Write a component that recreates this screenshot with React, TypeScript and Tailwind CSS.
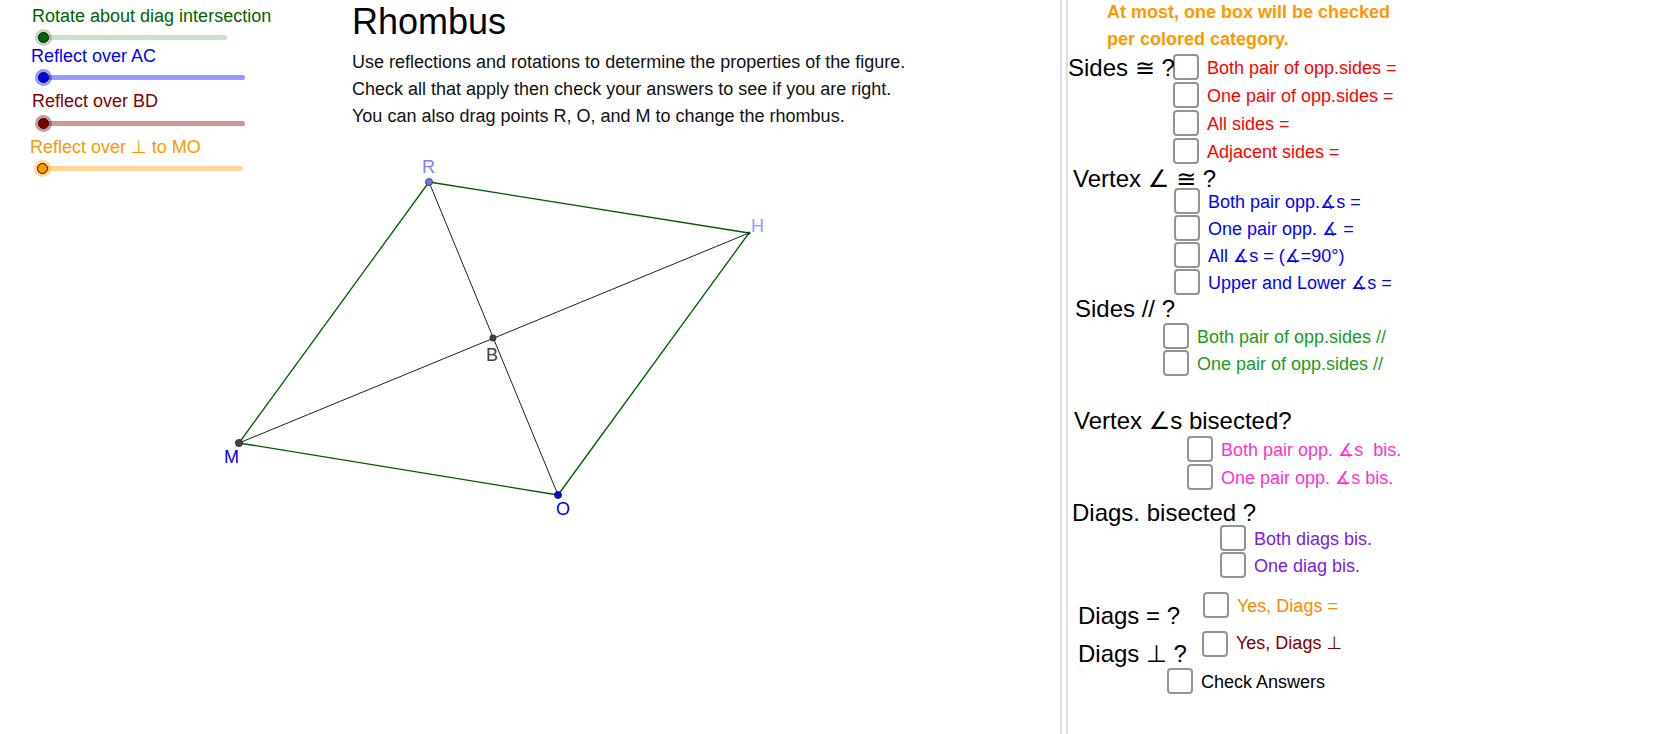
import React from "react";

const FONT = "font-['Liberation_Sans',Arial,'DejaVu_Sans',sans-serif]";

function Slider({
  label,
  labelCls,
  wrapCls,
  sliderCls,
  trackCls,
  haloCls,
  knobCls,
}: {
  label: string;
  labelCls: string;
  wrapCls: string;
  sliderCls: string;
  trackCls: string;
  haloCls: string;
  knobCls: string;
}) {
  return (
    <div className={wrapCls}>
      <div className={`text-[18px] leading-[20px] h-[20px] whitespace-nowrap ${labelCls}`}>{label}</div>
      <div className={`relative h-[18px] flex items-center ${sliderCls}`}>
        <div className={`h-[5px] rounded-full ${trackCls}`} />
        <div
          className={`absolute left-[-8.5px] top-[0.5px] w-[17px] h-[17px] rounded-full flex items-center justify-center ${haloCls}`}
        >
          <div className={`w-[11px] h-[11px] rounded-full border border-[#111] ${knobCls}`} />
        </div>
      </div>
    </div>
  );
}

function Box() {
  return <div className="relative w-[26px] h-[26px] shrink-0 rounded-[4px] border-2 border-[#949494] bg-white" />;
}

function Row({
  rowCls,
  leadCls,
  lead,
  label,
  labelCls,
}: {
  rowCls: string;
  leadCls: string;
  lead?: React.ReactNode;
  label: string;
  labelCls: string;
}) {
  return (
    <div className={`flex items-start ${rowCls}`}>
      <div className={`shrink-0 relative z-10 ${leadCls}`}>{lead}</div>
      <Box />
      <span className={`ml-[8px] text-[18px] leading-[26px] pt-[1px] whitespace-nowrap ${labelCls}`}>{label}</span>
    </div>
  );
}

function Geometry() {
  const R = [429, 182];
  const H = [749, 233];
  const M = [239, 443];
  const O = [558, 495];
  const B = [493, 338];
  return (
    <svg className="absolute left-0 top-0 pointer-events-none" width={1060} height={734} viewBox="0 0 1060 734">
      <g stroke="#005c00" strokeWidth={1.3} fill="none">
        <line x1={R[0]} y1={R[1]} x2={H[0]} y2={H[1]} />
        <line x1={H[0]} y1={H[1]} x2={O[0]} y2={O[1]} />
        <line x1={O[0]} y1={O[1]} x2={M[0]} y2={M[1]} />
        <line x1={M[0]} y1={M[1]} x2={R[0]} y2={R[1]} />
      </g>
      <g stroke="#1e1e1e" strokeWidth={1} fill="none">
        <line x1={R[0]} y1={R[1]} x2={O[0]} y2={O[1]} />
        <line x1={M[0]} y1={M[1]} x2={H[0]} y2={H[1]} />
      </g>
      <circle cx={R[0]} cy={R[1]} r={3.5} fill="#7373ee" stroke="#333" strokeWidth={0.8} />
      <circle cx={H[0]} cy={H[1]} r={1.6} fill="#333" />
      <circle cx={M[0]} cy={M[1]} r={3.6} fill="#444" stroke="#222" strokeWidth={0.8} />
      <circle cx={O[0]} cy={O[1]} r={3.6} fill="#0000ff" stroke="#222" strokeWidth={0.8} />
      <circle cx={B[0]} cy={B[1]} r={3.2} fill="#444" stroke="#222" strokeWidth={0.6} />
      <g fontFamily="'Liberation Sans', Arial, sans-serif" fontSize={18}>
        <text x={422} y={173} fill="#8080ff">R</text>
        <text x={751} y={232} fill="#9999ff">H</text>
        <text x={224} y={463} fill="#0000ff">M</text>
        <text x={556} y={515} fill="#0000ff">O</text>
        <text x={486} y={361} fill="#444444">B</text>
      </g>
    </svg>
  );
}

export default function App() {
  return (
    <div className={`w-[1657px] h-[734px] overflow-hidden bg-white flex ${FONT}`}>
      {/* Left graphics view */}
      <div className="relative w-[1060px] h-full shrink-0 flex">
        <Geometry />
        <div className="relative w-[352px] shrink-0 pt-[6px]">
          <Slider
            label="Rotate about diag intersection"
            labelCls="ml-[32px] text-[#006400]"
            wrapCls=""
            sliderCls="mt-[2px] ml-[43px]"
            trackCls="w-[184px] bg-[#c8e0c8]"
            haloCls="bg-[#006400]/25"
            knobCls="bg-[#006400]"
          />
          <Slider
            label="Reflect over AC"
            labelCls="ml-[31px] text-[#0000ff]"
            wrapCls=""
            sliderCls="mt-[2px] ml-[43px]"
            trackCls="w-[202px] bg-[#9999ff]"
            haloCls="bg-[#0000ff]/40"
            knobCls="bg-[#0000ff]"
          />
          <Slider
            label="Reflect over BD"
            labelCls="ml-[32px] text-[#800000]"
            wrapCls="mt-[5px]"
            sliderCls="mt-[3px] ml-[43px]"
            trackCls="w-[202px] bg-[#cc9999]"
            haloCls="bg-[#800000]/40"
            knobCls="bg-[#800000]"
          />
          <Slider
            label="Reflect over ⊥ to MO"
            labelCls="ml-[30px] text-[#ff9900]"
            wrapCls="mt-[5px]"
            sliderCls="mt-[2px] ml-[42px]"
            trackCls="w-[201px] bg-[#ffd699]"
            haloCls="bg-[#ff9900]/40"
            knobCls="bg-[#ff9900]"
          />
        </div>
        <div className="relative pt-[2px]">
          <div className="text-[36px] leading-[40px] text-black">Rhombus</div>
          <div className="mt-[7px] text-[18px] leading-[27px] text-[#111111]">
            <div>Use reflections and rotations to determine the properties of the figure.</div>
            <div>Check all that apply then check your answers to see if you are right.</div>
            <div>You can also drag points R, O, and M to change the rhombus.</div>
          </div>
        </div>
      </div>

      {/* Splitter */}
      <div className="w-[8px] h-full shrink-0 border-x-2 border-[#dedede] bg-white" />

      {/* Right graphics view */}
      <div className="flex-1 h-full text-black">
        <div className="-mt-[1px] ml-[39px] text-[18px] leading-[27px] font-bold text-[#ff9900]">
          <div>At most, one box will be checked</div>
          <div>per colored category.</div>
        </div>

        {/* Sides congruent */}
        <div className="mt-[1px]">
          <Row
            rowCls="h-[28px]"
            leadCls="w-[105px]"
            lead={<div className="text-[24px] leading-[26px] pt-[1px] whitespace-nowrap">Sides ≅ ?</div>}
            label="Both pair of opp.sides ="
            labelCls="text-[#ff0000]"
          />
          <Row rowCls="h-[28px]" leadCls="w-[105px]" label="One pair of opp.sides =" labelCls="text-[#ff0000]" />
          <Row rowCls="h-[28px]" leadCls="w-[105px]" label="All sides =" labelCls="text-[#ff0000]" />
          <Row rowCls="h-[28px]" leadCls="w-[105px]" label="Adjacent sides =" labelCls="text-[#ff0000]" />
        </div>

        {/* Vertex angles */}
        <div className="mt-[2px] ml-[5px] h-[22px] text-[24px] leading-[22px] whitespace-nowrap">Vertex ∠ ≅ ?</div>
        <div className="-mt-[2px]">
          <Row rowCls="h-[27px]" leadCls="w-[106px]" label="Both pair opp.∡s =" labelCls="text-[#0000ff]" />
          <Row rowCls="h-[27px]" leadCls="w-[106px]" label="One pair opp. ∡ =" labelCls="text-[#0000ff]" />
          <Row rowCls="h-[27px]" leadCls="w-[106px]" label="All ∡s = (∡=90°)" labelCls="text-[#0000ff]" />
          <Row rowCls="h-[27px]" leadCls="w-[106px]" label="Upper and Lower ∡s =" labelCls="text-[#0000ff]" />
        </div>

        {/* Sides parallel */}
        <div className="mt-[2px] ml-[7px] h-[22px] text-[24px] leading-[22px] whitespace-nowrap">Sides // ?</div>
        <div className="mt-[3px]">
          <Row rowCls="h-[27px]" leadCls="w-[95px]" label="Both pair of opp.sides //" labelCls="text-[#1a9c1a]" />
          <Row rowCls="h-[27px]" leadCls="w-[95px]" label="One pair of opp.sides //" labelCls="text-[#1a9c1a]" />
        </div>

        {/* Vertex angles bisected */}
        <div className="mt-[33px] ml-[6px] h-[22px] text-[24px] leading-[22px] whitespace-nowrap">Vertex ∠s bisected?</div>
        <div className="mt-[4px]">
          <Row rowCls="h-[28px]" leadCls="w-[119px]" label="Both pair opp. ∡s  bis." labelCls="text-[#ff33cc] whitespace-pre" />
          <Row rowCls="h-[28px]" leadCls="w-[119px]" label="One pair opp. ∡s bis." labelCls="text-[#ff33cc]" />
        </div>

        {/* Diagonals bisected */}
        <div className="mt-[10px] ml-[4px] h-[22px] text-[24px] leading-[22px] whitespace-nowrap">Diags. bisected ?</div>
        <div className="mt-[1px]">
          <Row rowCls="h-[27px]" leadCls="w-[152px]" label="Both diags bis." labelCls="text-[#7a1be0]" />
          <Row rowCls="h-[27px]" leadCls="w-[152px]" label="One diag bis." labelCls="text-[#7a1be0]" />
        </div>

        {/* Diagonals equal */}
        <div className="mt-[13px]">
          <Row
            rowCls=""
            leadCls="w-[135px]"
            lead={<div className="pl-[10px] pt-[12px] text-[24px] leading-[24px] whitespace-nowrap">Diags = ?</div>}
            label="Yes, Diags ="
            labelCls="text-[#ff8800]"
          />
        </div>

        {/* Diagonals perpendicular */}
        <div className="mt-[3px]">
          <Row
            rowCls=""
            leadCls="w-[134px]"
            lead={<div className="pl-[10px] pt-[11px] text-[24px] leading-[24px] whitespace-nowrap">Diags ⊥ ?</div>}
            label="Yes, Diags ⊥"
            labelCls="text-[#800000] -mt-[2px]"
          />
        </div>

        {/* Check answers */}
        <div className="mt-[2px]">
          <Row rowCls="h-[27px]" leadCls="w-[99px]" label="Check Answers" labelCls="text-black" />
        </div>
      </div>
    </div>
  );
}
